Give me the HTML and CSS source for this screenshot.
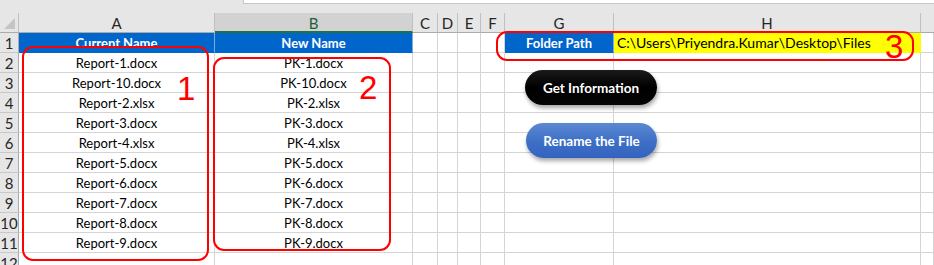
FILE: index.html
```html
<!DOCTYPE html>
<html>
<head>
<meta charset="utf-8">
<link rel="stylesheet" href="styles.css">
</head>
<body>
<div class="app">
  <div class="topbar"><div class="formula"></div></div>
  <div class="sheet">
    <div class="corner"><span class="tri"></span></div>
    <div class="ch">A</div>
    <div class="ch sel">B</div>
    <div class="ch">C</div>
    <div class="ch">D</div>
    <div class="ch">E</div>
    <div class="ch">F</div>
    <div class="ch">G</div>
    <div class="ch">H</div>
    <div class="ch end"></div>

    <div class="rh">1</div>
    <div class="c head">Current Name</div>
    <div class="c head">New Name</div>
    <div class="c"></div><div class="c"></div><div class="c"></div><div class="c"></div>
    <div class="c head">Folder Path</div>
    <div class="c path">C:\Users\Priyendra.Kumar\Desktop\Files</div>
    <div class="c"></div>

    <div class="rh">2</div><div class="c">Report-1.docx</div><div class="c">PK-1.docx</div><div class="c"></div><div class="c"></div><div class="c"></div><div class="c"></div><div class="c"></div><div class="c"></div><div class="c"></div>
    <div class="rh">3</div><div class="c">Report-10.docx</div><div class="c">PK-10.docx</div><div class="c"></div><div class="c"></div><div class="c"></div><div class="c"></div><div class="c"></div><div class="c"></div><div class="c"></div>
    <div class="rh">4</div><div class="c">Report-2.xlsx</div><div class="c">PK-2.xlsx</div><div class="c"></div><div class="c"></div><div class="c"></div><div class="c"></div><div class="c"></div><div class="c"></div><div class="c"></div>
    <div class="rh">5</div><div class="c">Report-3.docx</div><div class="c">PK-3.docx</div><div class="c"></div><div class="c"></div><div class="c"></div><div class="c"></div><div class="c"></div><div class="c"></div><div class="c"></div>
    <div class="rh">6</div><div class="c">Report-4.xlsx</div><div class="c">PK-4.xlsx</div><div class="c"></div><div class="c"></div><div class="c"></div><div class="c"></div><div class="c"></div><div class="c"></div><div class="c"></div>
    <div class="rh">7</div><div class="c">Report-5.docx</div><div class="c">PK-5.docx</div><div class="c"></div><div class="c"></div><div class="c"></div><div class="c"></div><div class="c"></div><div class="c"></div><div class="c"></div>
    <div class="rh">8</div><div class="c">Report-6.docx</div><div class="c">PK-6.docx</div><div class="c"></div><div class="c"></div><div class="c"></div><div class="c"></div><div class="c"></div><div class="c"></div><div class="c"></div>
    <div class="rh">9</div><div class="c">Report-7.docx</div><div class="c">PK-7.docx</div><div class="c"></div><div class="c"></div><div class="c"></div><div class="c"></div><div class="c"></div><div class="c"></div><div class="c"></div>
    <div class="rh">10</div><div class="c">Report-8.docx</div><div class="c">PK-8.docx</div><div class="c"></div><div class="c"></div><div class="c"></div><div class="c"></div><div class="c"></div><div class="c"></div><div class="c"></div>
    <div class="rh">11</div><div class="c">Report-9.docx</div><div class="c">PK-9.docx</div><div class="c"></div><div class="c"></div><div class="c"></div><div class="c"></div><div class="c"></div><div class="c"></div><div class="c"></div>
    <div class="rh">12</div><div class="c"></div><div class="c"></div><div class="c"></div><div class="c"></div><div class="c"></div><div class="c"></div><div class="c"></div><div class="c"></div><div class="c"></div>
  </div>

  <div class="mark box1"></div>
  <div class="mark box2"></div>
  <div class="mark box3"></div>
  <div class="num n1">1</div>
  <div class="num n2">2</div>
  <div class="num n3">3</div>

  <div class="btn btn-black">Get Information</div>
  <div class="btn btn-blue">Rename the File</div>
</div>
</body>
</html>
```

FILE: styles.css
```css
* { box-sizing: border-box; }
html, body { margin: 0; padding: 0; background: #ffffff; }
body { width: 934px; height: 265px; overflow: hidden; font-family: Lato, "Liberation Sans", sans-serif; }

.app { position: relative; width: 934px; height: 265px; overflow: hidden; }

.topbar { height: 13px; background: #e6e6e6; display: flex; justify-content: flex-end; }
.formula { width: 691px; height: 4px; background: #ffffff; border-left: 1px solid #c6c6c6; border-bottom: 1px solid #c6c6c6; }

.sheet {
  display: grid;
  grid-template-columns: 19px 196px 198px 25px 20px 23px 24px 109px 307px 13px;
  grid-auto-rows: 20px;
}

.corner, .ch {
  background: #e6e6e6;
  border-right: 1px solid #c0c0c0;
  border-bottom: 1px solid #ababab;
  font-size: 15px;
  color: #262626;
  display: flex;
  align-items: center;
  justify-content: center;
  padding-top: 1px;
}
.corner { position: relative; }
.tri {
  position: absolute; right: 3px; bottom: 3px;
  width: 0; height: 0;
  border-left: 11px solid transparent;
  border-bottom: 11px solid #c4c4c4;
}
.ch.sel { background: #d2d2d2; color: #1e5e3a; border-bottom: 2px solid #217346; padding-top: 2px; }
.ch.end { border-right: none; }

.rh {
  background: #e6e6e6;
  border-right: 1px solid #ababab;
  border-bottom: 1px solid #c8c8c8;
  font-size: 15px;
  color: #262626;
  display: flex;
  align-items: center;
  justify-content: center;
}

.c {
  border-right: 1px solid #d4d4d4;
  border-bottom: 1px solid #d4d4d4;
  font-size: 13px;
  color: #000;
  display: flex;
  align-items: center;
  justify-content: center;
  white-space: nowrap;
}
.c.head { background: #0066cc; color: #ffffff; font-weight: bold; border-right-color: #7fa9d8; border-bottom-color: #0066cc; }
.c.path { background: #ffff00; font-size: 14px; justify-content: flex-start; padding-left: 3px; border-right-color: #ffff00; border-bottom-color: #ffff00; }

.mark { position: absolute; border: 2px solid #ff0000; border-radius: 11px; }
.box1 { left: 22px; top: 46px; width: 187px; height: 215px; }
.box2 { left: 213px; top: 57px; width: 178px; height: 194px; }
.box3 { left: 496px; top: 31px; width: 418px; height: 30px; }

.num { position: absolute; color: #ff0000; font-family: "Liberation Sans", sans-serif; font-size: 33px; line-height: 1; }
.n1 { left: 177px; top: 72px; }
.n2 { left: 359px; top: 71px; }
.n3 { left: 885px; top: 30px; }

.btn {
  position: absolute;
  height: 35px;
  border-radius: 18px;
  color: #ffffff;
  font-weight: bold;
  font-size: 13.5px;
  display: flex;
  align-items: center;
  justify-content: center;
  box-shadow: 1px 3px 4px rgba(0,0,0,0.35);
}
.btn-black { left: 525px; top: 70px; width: 132px; background: linear-gradient(#1a1a1a, #000000 50%, #050505); }
.btn-blue { left: 526px; top: 123px; width: 131px; background: linear-gradient(#5b88d2, #3e6fc6 55%, #3363bf); }
```
